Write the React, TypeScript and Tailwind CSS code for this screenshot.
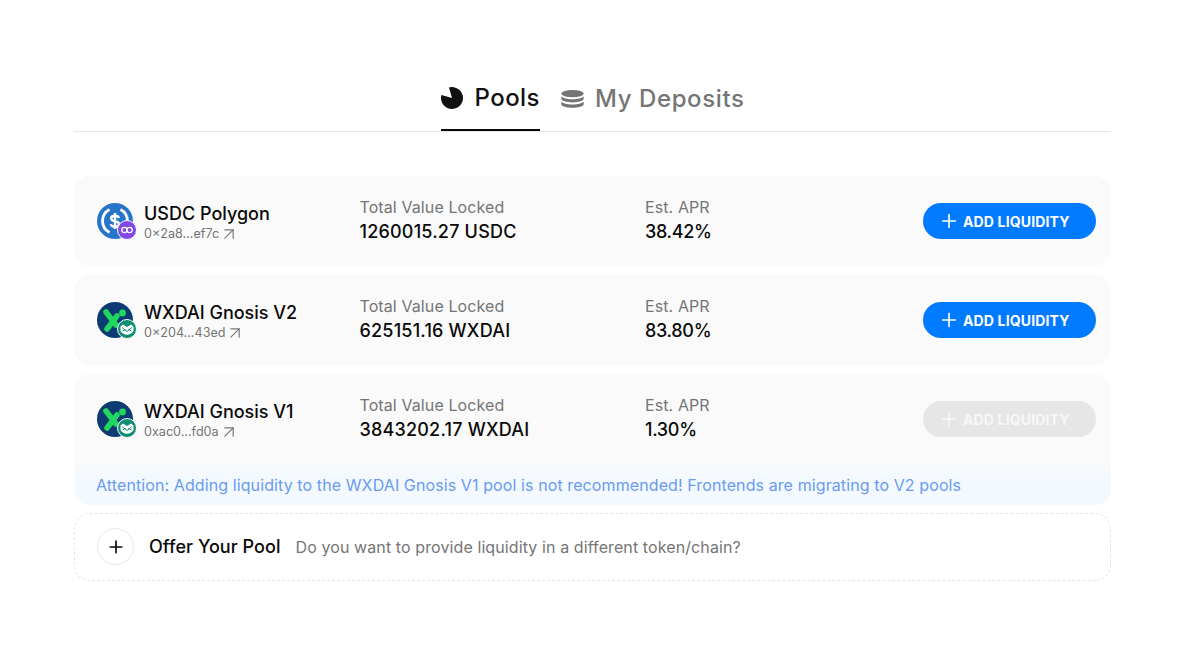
import { Plus, ArrowUpRight } from 'lucide-react';

interface Pool {
  name: string;
  address: string;
  tvl: string;
  apr: string;
  kind: 'usdc' | 'wxdai';
  disabled?: boolean;
  notice?: string;
}

const POOLS: Pool[] = [
  { name: 'USDC Polygon', address: '0×2a8...ef7c', tvl: '1260015.27 USDC', apr: '38.42%', kind: 'usdc' },
  { name: 'WXDAI Gnosis V2', address: '0×204...43ed', tvl: '625151.16 WXDAI', apr: '83.80%', kind: 'wxdai' },
  {
    name: 'WXDAI Gnosis V1',
    address: '0xac0...fd0a',
    tvl: '3843202.17 WXDAI',
    apr: '1.30%',
    kind: 'wxdai',
    disabled: true,
    notice: 'Attention: Adding liquidity to the WXDAI Gnosis V1 pool is not recommended! Frontends are migrating to V2 pools',
  },
];

function PoolsIcon() {
  return (
    <svg width="22" height="22" viewBox="0 0 22 22" className="shrink-0">
      <path d="M8 .4A11 11 0 1 1 .4 8L11 11z" fill="#111" />
    </svg>
  );
}

function DepositsIcon() {
  return (
    <svg width="23" height="18" viewBox="0 0 23 18" fill="#757575" className="shrink-0">
      <ellipse cx="11.5" cy="3.6" rx="11.2" ry="3.6" />
      <path d="M.3 6.200c1.600 2 6 3 11.200 3s9.600-1 11.200-3v2.600c0 2-5 3.600-11.200 3.600S.3 10.800.3 8.800z" />
      <path d="M.3 11.400c1.600 2 6 3 11.200 3s9.600-1 11.200-3v2.800c0 2-5 3.600-11.200 3.600S.3 16.200.3 14.200z" />
    </svg>
  );
}

function UsdcLogo() {
  return (
    <svg width="40" height="40" viewBox="0 0 40 40" className="shrink-0">
      <circle cx="18" cy="20" r="18" fill="#2775ca" />
      <path d="M12.500 8.500a13 13 0 0 0 0 23M23.500 8.500a13 13 0 0 1 0 23" fill="none" stroke="#fff" strokeWidth="2.800" />
      <path d="M22 17c-.5-1.500-2-2.200-4-2.200-2.300 0-3.900 1-3.900 2.800 0 3.800 8.100 1.800 8.100 5.400 0 1.800-1.800 2.700-4.100 2.700-2.200 0-3.900-.9-4.300-2.500M18 12v16" fill="none" stroke="#fff" strokeWidth="2.400" />
      <circle cx="30" cy="29" r="9.500" fill="#8247e5" stroke="#fafafa" strokeWidth="1" />
      <circle cx="27.400" cy="29" r="2.600" fill="none" stroke="#fff" strokeWidth="1.300" />
      <circle cx="32.600" cy="29" r="2.600" fill="none" stroke="#fff" strokeWidth="1.300" />
    </svg>
  );
}

function WxdaiLogo() {
  return (
    <svg width="40" height="40" viewBox="0 0 40 40" className="shrink-0">
      <circle cx="18" cy="20" r="18" fill="#0b3b72" />
      <path d="M9 12 19 25" stroke="#1fd65f" strokeWidth="5.500" strokeLinecap="round" />
      <path d="M10 29 20 16" stroke="#1fd65f" strokeWidth="5.500" strokeLinecap="round" />
      <circle cx="25.500" cy="13" r="3.400" fill="#1fd65f" />
      <circle cx="30" cy="29" r="9.500" fill="#0d8e74" stroke="#fafafa" strokeWidth="1" />
      <path d="M23.500 26.500 26 24.500l4 2.500 4-2.500 2.500 2V31c-1.800 2.600-3.800 3.800-6.500 3.800s-4.700-1.200-6.500-3.800z" fill="#fff" />
      <path d="M25 27.500l5 4 5-4M25.500 31l3-1.500M34.500 31l-3-1.500" fill="none" stroke="#0d8e74" strokeWidth="1" />
    </svg>
  );
}

function PoolCard({ pool }: { pool: Pool }) {
  return (
    <div className={`rounded-2xl overflow-hidden ${pool.notice ? 'bg-gradient-to-b from-[#fafafa] from-66% to-[#f3f9ff] to-80%' : 'bg-[#fafafa]'}`}>
      <div className="flex items-center h-[90px] pl-[23px] pr-[15px]">
        <div className="flex items-center w-[262.5px] gap-[7px]">
          {pool.kind === 'usdc' ? <UsdcLogo /> : <WxdaiLogo />}
          <div className="mt-[3px]">
            <div className="text-[18px] leading-[22px] font-medium text-[#0a0a0a]">{pool.name}</div>
            <div className="flex items-center text-[12.6px] leading-[18px] text-[#757575]">
              {pool.address}
              <ArrowUpRight size={20} strokeWidth={1.4} className="-my-1" />
            </div>
          </div>
        </div>
        <div className="w-[285.5px] mb-[1px]">
          <div className="text-[16px] leading-[20px] tracking-[0.1px] text-[#757575] mb-[3px]">Total Value Locked</div>
          <div className="text-[18px] leading-[24px] tracking-[0.2px] font-medium text-[#0a0a0a]">{pool.tvl}</div>
        </div>
        <div className="flex-1 mb-[1px]">
          <div className="text-[16px] leading-[20px] tracking-[0.1px] text-[#757575] mb-[3px]">Est. APR</div>
          <div className="text-[18px] leading-[24px] tracking-[-0.3px] font-medium text-[#0a0a0a]">{pool.apr}</div>
        </div>
        <button className={`flex items-center gap-[3px] w-[173px] h-9 pl-[15px] rounded-full text-[14px] tracking-[0.15px] font-bold ${pool.disabled ? 'bg-[#e6e6e6] text-[#f7f7f7]' : 'bg-[#007aff] text-white'}`}>
          <Plus size={22} strokeWidth={1.75} />
          ADD LIQUIDITY
        </button>
      </div>
      {pool.notice && (
        <div className="pl-[22px] pt-[10px] pb-[9px] text-[16px] leading-[22px] tracking-[0.1px] text-[#6a9bf0]">{pool.notice}</div>
      )}
    </div>
  );
}

export default function App() {
  return (
    <div className="min-h-screen bg-white px-[74px] pt-[74px] font-['Inter',sans-serif]">
      <div className="w-[1037px]">
        <div className="flex justify-center gap-[21px] border-b border-[#e5e5e5]">
          <div className="flex items-center gap-3 h-[57px] pb-2 border-b-2 border-[#0a0a0a] -mb-px">
            <PoolsIcon />
            <span className="text-[24px] font-medium tracking-[0.45px] text-[#111]">Pools</span>
          </div>
          <div className="flex items-center gap-[11px] h-[57px] pb-2">
            <DepositsIcon />
            <span className="text-[24px] font-medium tracking-[0.6px] text-[#757575]">My Deposits</span>
          </div>
        </div>

        <div className="flex flex-col gap-[9px] mt-[44px]">
          {POOLS.map((pool) => (
            <PoolCard key={pool.name} pool={pool} />
          ))}
        </div>

        <div className="flex items-center h-[68px] mt-2 pl-[22px] pb-[1px] rounded-2xl border border-dashed border-[#e5e5e5]">
          <div className="flex items-center justify-center w-[37px] h-[37px] rounded-full bg-white border border-[#e8e8e8] text-[#0a0a0a]">
            <Plus size={20} strokeWidth={2} />
          </div>
          <span className="ml-[15px] text-[18px] tracking-[0.05px] font-medium text-[#0a0a0a]">Offer Your Pool</span>
          <span className="ml-[15px] text-[16px] tracking-[0.1px] text-[#757575]">Do you want to provide liquidity in a different token/chain?</span>
        </div>
      </div>
    </div>
  );
}
